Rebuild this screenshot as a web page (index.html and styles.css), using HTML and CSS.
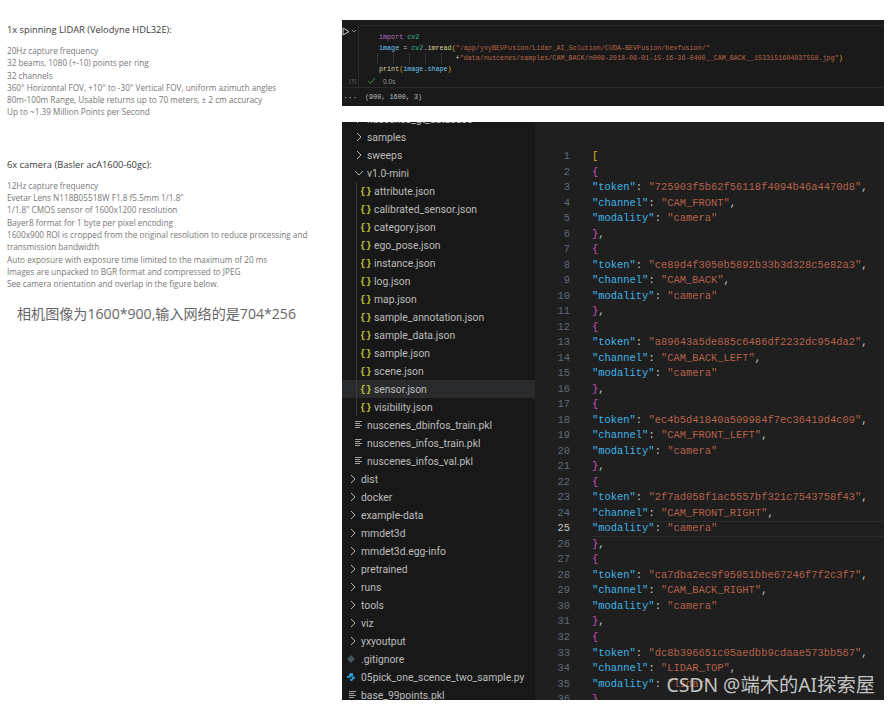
FILE: index.html
```html
<!DOCTYPE html>
<html lang="en">

<head>
    <meta charset="UTF-8">
    <meta name="viewport" content="width=device-width, initial-scale=1.0">
    <title>Sensors</title>
    <link rel="stylesheet" href="styles.css">
</head>

<body>
    <div class="page">
        <div class="notes">
            <h2 class="note-title first">1x spinning LIDAR (Velodyne HDL32E):</h2>
            <p class="note-text">20Hz capture frequency<br>32 beams, 1080 (+-10) points per ring<br>32 channels<br>360° Horizontal FOV, +10° to -30° Vertical FOV, uniform azimuth angles<br>80m-100m Range, Usable returns up to 70 meters, ± 2 cm accuracy<br>Up to ~1.39 Million Points per Second</p>
            <h2 class="note-title second">6x camera (Basler acA1600-60gc):</h2>
            <p class="note-text">12Hz capture frequency<br>Evetar Lens N118B05518W F1.8 f5.5mm 1/1.8"<br>1/1.8" CMOS sensor of 1600x1200 resolution<br>Bayer8 format for 1 byte per pixel encoding<br>1600x900 ROI is cropped from the original resolution to reduce processing and transmission bandwidth<br>Auto exposure with exposure time limited to the maximum of 20 ms<br>Images are unpacked to BGR format and compressed to JPEG<br>See camera orientation and overlap in the figure below.</p>
            <p class="note-cn">相机图像为1600*900,输入网络的是704*256</p>
        </div>

        <div class="shots">
            <div class="notebook">
                <div class="cell">
                    <div class="cell-run">
                        <svg width="16" height="10" viewBox="0 0 16 10"><path d="M1 1v7l6-3.500z" fill="none" stroke="#c5c5c5"/><path d="M10 3l2 2 2-2" fill="none" stroke="#8a8a8a"/></svg>
                    </div>
                    <div class="cell-body">
                        <pre class="cell-code"><span class="indent"></span><span class="kw">import</span> <span class="mod">cv2</span>
<span class="var">image</span> = <span class="mod">cv2</span>.<span class="fn">imread</span><span class="gold">(</span><span class="str">"/app/yxyBEVFusion/Lidar_AI_Solution/CUDA-BEVFusion/bevfusion/"</span>
                   +<span class="str">"data/nuscenes/samples/CAM_BACK/n008-2018-08-01-15-16-36-0400__CAM_BACK__1533151604037558.jpg"</span><span class="gold">)</span>
<span class="fn">print</span><span class="gold">(</span><span class="var">image</span>.<span class="var">shape</span><span class="gold">)</span></pre>
                        <div class="cell-status">
                            <span class="cell-count">[3]</span>
                            <svg class="cell-check" width="9" height="8" viewBox="0 0 9 8"><path d="M1 4l2.500 2.500L8 1" fill="none" stroke="#3f9142"/></svg>
                            <span class="cell-time">0.0s</span>
                        </div>
                    </div>
                </div>
                <div class="cell-output"><span class="dots">···</span><span class="output-text">(900, 1600, 3)</span></div>
            </div>

            <div class="ide">
                <div class="explorer">
                    <div class="guide"></div>
                    <div class="row d2"><svg class="chev" viewBox="0 0 8 10"><path d="M2 1l4 4-4 4"/></svg>nuscenes_gt_database</div>
                    <div class="row d2"><svg class="chev" viewBox="0 0 8 10"><path d="M2 1l4 4-4 4"/></svg>samples</div>
                    <div class="row d2"><svg class="chev" viewBox="0 0 8 10"><path d="M2 1l4 4-4 4"/></svg>sweeps</div>
                    <div class="row d2"><svg class="chev" viewBox="0 0 8 10"><path d="M0 3l4 4 4-4"/></svg>v1.0-mini</div>
                    <div class="row d3"><span class="json">{}</span>attribute.json</div>
                    <div class="row d3"><span class="json">{}</span>calibrated_sensor.json</div>
                    <div class="row d3"><span class="json">{}</span>category.json</div>
                    <div class="row d3"><span class="json">{}</span>ego_pose.json</div>
                    <div class="row d3"><span class="json">{}</span>instance.json</div>
                    <div class="row d3"><span class="json">{}</span>log.json</div>
                    <div class="row d3"><span class="json">{}</span>map.json</div>
                    <div class="row d3"><span class="json">{}</span>sample_annotation.json</div>
                    <div class="row d3"><span class="json">{}</span>sample_data.json</div>
                    <div class="row d3"><span class="json">{}</span>sample.json</div>
                    <div class="row d3"><span class="json">{}</span>scene.json</div>
                    <div class="row d3 selected"><span class="json">{}</span>sensor.json</div>
                    <div class="row d3"><span class="json">{}</span>visibility.json</div>
                    <div class="row d2"><svg class="lines" viewBox="0 0 8 8"><path d="M0 .5h7M0 2.500h5M0 4.500h7M0 6.500h5"/></svg>nuscenes_dbinfos_train.pkl</div>
                    <div class="row d2"><svg class="lines" viewBox="0 0 8 8"><path d="M0 .5h7M0 2.500h5M0 4.500h7M0 6.500h5"/></svg>nuscenes_infos_train.pkl</div>
                    <div class="row d2"><svg class="lines" viewBox="0 0 8 8"><path d="M0 .5h7M0 2.500h5M0 4.500h7M0 6.500h5"/></svg>nuscenes_infos_val.pkl</div>
                    <div class="row d1"><svg class="chev" viewBox="0 0 8 10"><path d="M2 1l4 4-4 4"/></svg>dist</div>
                    <div class="row d1"><svg class="chev" viewBox="0 0 8 10"><path d="M2 1l4 4-4 4"/></svg>docker</div>
                    <div class="row d1"><svg class="chev" viewBox="0 0 8 10"><path d="M2 1l4 4-4 4"/></svg>example-data</div>
                    <div class="row d1"><svg class="chev" viewBox="0 0 8 10"><path d="M2 1l4 4-4 4"/></svg>mmdet3d</div>
                    <div class="row d1"><svg class="chev" viewBox="0 0 8 10"><path d="M2 1l4 4-4 4"/></svg>mmdet3d.egg-info</div>
                    <div class="row d1"><svg class="chev" viewBox="0 0 8 10"><path d="M2 1l4 4-4 4"/></svg>pretrained</div>
                    <div class="row d1"><svg class="chev" viewBox="0 0 8 10"><path d="M2 1l4 4-4 4"/></svg>runs</div>
                    <div class="row d1"><svg class="chev" viewBox="0 0 8 10"><path d="M2 1l4 4-4 4"/></svg>tools</div>
                    <div class="row d1"><svg class="chev" viewBox="0 0 8 10"><path d="M2 1l4 4-4 4"/></svg>viz</div>
                    <div class="row d1"><svg class="chev" viewBox="0 0 8 10"><path d="M2 1l4 4-4 4"/></svg>yxyoutput</div>
                    <div class="row d0"><svg class="file-icon" viewBox="0 0 8 8"><path d="M4 0l4 4-4 4-4-4z" fill="#41535b"/></svg>.gitignore</div>
                    <div class="row d0"><svg class="file-icon" viewBox="0 0 8 8"><path d="M2 3V1.500L3.500 0h2L6 1v2H3v.500h3.500L8 4v1.500L6.500 6H5V4.500H2.500L2 5H.5L0 4V3z" fill="#2ba0e0"/><path d="M3 6h3v1l-1 1H3.500L3 7z" fill="#2ba0e0"/></svg>05pick_one_scence_two_sample.py</div>
                    <div class="row d1b"><svg class="lines" viewBox="0 0 8 8"><path d="M0 .5h7M0 2.500h5M0 4.500h7M0 6.500h5"/></svg>base_99points.pkl</div>
                </div>

                <div class="editor">
                    <div class="line"><span class="num">1</span><span class="code"><span class="gold">[</span></span></div>
                    <div class="line"><span class="num">2</span><span class="code"><span class="pink">{</span></span></div>
                    <div class="line"><span class="num">3</span><span class="code"><span class="key">"token"</span>: <span class="val">"725903f5b62f56118f4094b46a4470d8"</span>,</span></div>
                    <div class="line"><span class="num">4</span><span class="code"><span class="key">"channel"</span>: <span class="val">"CAM_FRONT"</span>,</span></div>
                    <div class="line"><span class="num">5</span><span class="code"><span class="key">"modality"</span>: <span class="val">"camera"</span></span></div>
                    <div class="line"><span class="num">6</span><span class="code"><span class="pink">}</span>,</span></div>
                    <div class="line"><span class="num">7</span><span class="code"><span class="pink">{</span></span></div>
                    <div class="line"><span class="num">8</span><span class="code"><span class="key">"token"</span>: <span class="val">"ce89d4f3050b5892b33b3d328c5e82a3"</span>,</span></div>
                    <div class="line"><span class="num">9</span><span class="code"><span class="key">"channel"</span>: <span class="val">"CAM_BACK"</span>,</span></div>
                    <div class="line"><span class="num">10</span><span class="code"><span class="key">"modality"</span>: <span class="val">"camera"</span></span></div>
                    <div class="line"><span class="num">11</span><span class="code"><span class="pink">}</span>,</span></div>
                    <div class="line"><span class="num">12</span><span class="code"><span class="pink">{</span></span></div>
                    <div class="line"><span class="num">13</span><span class="code"><span class="key">"token"</span>: <span class="val">"a89643a5de885c6486df2232dc954da2"</span>,</span></div>
                    <div class="line"><span class="num">14</span><span class="code"><span class="key">"channel"</span>: <span class="val">"CAM_BACK_LEFT"</span>,</span></div>
                    <div class="line"><span class="num">15</span><span class="code"><span class="key">"modality"</span>: <span class="val">"camera"</span></span></div>
                    <div class="line"><span class="num">16</span><span class="code"><span class="pink">}</span>,</span></div>
                    <div class="line"><span class="num">17</span><span class="code"><span class="pink">{</span></span></div>
                    <div class="line"><span class="num">18</span><span class="code"><span class="key">"token"</span>: <span class="val">"ec4b5d41840a509984f7ec36419d4c09"</span>,</span></div>
                    <div class="line"><span class="num">19</span><span class="code"><span class="key">"channel"</span>: <span class="val">"CAM_FRONT_LEFT"</span>,</span></div>
                    <div class="line"><span class="num">20</span><span class="code"><span class="key">"modality"</span>: <span class="val">"camera"</span></span></div>
                    <div class="line"><span class="num">21</span><span class="code"><span class="pink">}</span>,</span></div>
                    <div class="line"><span class="num">22</span><span class="code"><span class="pink">{</span></span></div>
                    <div class="line"><span class="num">23</span><span class="code"><span class="key">"token"</span>: <span class="val">"2f7ad058f1ac5557bf321c7543758f43"</span>,</span></div>
                    <div class="line"><span class="num">24</span><span class="code"><span class="key">"channel"</span>: <span class="val">"CAM_FRONT_RIGHT"</span>,</span></div>
                    <div class="line active"><span class="num">25</span><span class="code"><span class="key">"modality"</span>: <span class="val">"camera"</span></span></div>
                    <div class="line"><span class="num">26</span><span class="code"><span class="pink">}</span>,</span></div>
                    <div class="line"><span class="num">27</span><span class="code"><span class="pink">{</span></span></div>
                    <div class="line"><span class="num">28</span><span class="code"><span class="key">"token"</span>: <span class="val">"ca7dba2ec9f95951bbe67246f7f2c3f7"</span>,</span></div>
                    <div class="line"><span class="num">29</span><span class="code"><span class="key">"channel"</span>: <span class="val">"CAM_BACK_RIGHT"</span>,</span></div>
                    <div class="line"><span class="num">30</span><span class="code"><span class="key">"modality"</span>: <span class="val">"camera"</span></span></div>
                    <div class="line"><span class="num">31</span><span class="code"><span class="pink">}</span>,</span></div>
                    <div class="line"><span class="num">32</span><span class="code"><span class="pink">{</span></span></div>
                    <div class="line"><span class="num">33</span><span class="code"><span class="key">"token"</span>: <span class="val">"dc8b396651c05aedbb9cdaae573bb567"</span>,</span></div>
                    <div class="line"><span class="num">34</span><span class="code"><span class="key">"channel"</span>: <span class="val">"LIDAR_TOP"</span>,</span></div>
                    <div class="line"><span class="num">35</span><span class="code"><span class="key">"modality"</span>: <span class="val">"lidar"</span></span></div>
                    <div class="line"><span class="num">36</span><span class="code"><span class="pink">}</span>,</span></div>
                </div>

                <div class="watermark">CSDN @端木的AI探索屋</div>
            </div>
        </div>
    </div>
</body>

</html>
```

FILE: styles.css
```css
body {
    margin: 0;
    padding: 0;
    background-color: #fff;
    font-family: "Open Sans", "Noto Sans CJK SC", sans-serif;
}

.page {
    display: grid;
    grid-template-columns: 342px 542px;
    height: 704px;
    overflow: hidden;
}

/* left column */
.notes {
    padding: 23px 20px 0 7px;
}

.note-title {
    margin: 0;
    font-size: 9.3px;
    font-weight: 400;
    line-height: 13px;
    color: #3a3a3a;
}

.note-title.second {
    margin-top: 39px;
}

.note-text {
    margin: 9px 0 0;
    font-size: 8.2px;
    line-height: 12.3px;
    color: #777;
}

.note-cn {
    margin: 14px 0 0 10px;
    font-size: 14.1px;
    line-height: 20px;
    color: #666;
}

/* right column */
.shots {
    display: flex;
    flex-direction: column;
    gap: 16px;
    padding-top: 20px;
}

.notebook {
    display: flex;
    flex-direction: column;
    height: 86px;
    background-color: #1a1a1a;
}

.cell {
    display: flex;
    height: 68px;
    padding-top: 5px;
    box-sizing: border-box;
    border-bottom: 1px solid #2a2a2a;
}

.cell-run {
    width: 16px;
    flex: none;
    padding-top: 2px;
}

.cell-run svg {
    display: block;
}

.cell-body {
    flex: 1;
    border-left: 1px solid #2a2a2a;
    border-top: 1px solid #2a2a2a;
}

.cell-code {
    position: relative;
    margin: 0;
    padding: 6px 0 0 20px;
    height: 49px;
    box-sizing: border-box;
    font-family: "Liberation Mono", monospace;
    font-size: 6.72px;
    line-height: 10.67px;
    color: #c8c8c8;
}

/* wrapped line indent guides */
.indent {
    position: absolute;
    left: 18px;
    top: 27px;
    width: 80px;
    height: 10px;
    background: repeating-linear-gradient(90deg, #333 0, #333 1px, transparent 1px, transparent 16px);
}

.kw { color: #b56bc0; }
.mod { color: #3fb59c; }
.var { color: #6fc3f0; }
.fn { color: #d6d29a; }
.gold { color: #e0b020; }
.str { color: #b8664a; }

.cell-status {
    display: flex;
    align-items: center;
    height: 12px;
    font-size: 6.5px;
    color: #9a9a9a;
}

.cell-count {
    width: 0;
    position: relative;
    left: -10px;
    font-size: 6px;
    color: #666;
}

.cell-check {
    margin-left: 8px;
}

.cell-time {
    margin-left: 7px;
}

.cell-output {
    display: flex;
    align-items: center;
    flex: 1;
    font-family: "Liberation Mono", monospace;
    font-size: 6.8px;
    color: #bdbdbd;
}

.dots {
    width: 23px;
    padding-left: 1px;
    box-sizing: border-box;
    font-size: 8px;
}

/* vscode shot */
.ide {
    position: relative;
    display: flex;
    height: 578px;
    overflow: hidden;
}

.explorer {
    position: relative;
    width: 193px;
    flex: none;
    margin-top: -12px;
    background-color: #181818;
    font-family: Roboto, sans-serif;
    font-size: 10.35px;
    color: #bcbcbc;
}

.guide {
    position: absolute;
    left: 14px;
    top: 72px;
    width: 1px;
    height: 234px;
    background-color: #3a3a3a;
}

.row {
    display: flex;
    align-items: center;
    height: 18px;
    white-space: nowrap;
}

.row.selected {
    background-color: #2a2b2d;
}

.d0 { padding-left: 5px; }
.d1 { padding-left: 7px; }
.d1b { padding-left: 7px; }
.d2 { padding-left: 13px; }
.d3 { padding-left: 18px; }

.chev {
    width: 8px;
    height: 10px;
    flex: none;
    margin-right: 4px;
    fill: none;
    stroke: #b4b4b4;
}

.lines {
    width: 8px;
    height: 8px;
    flex: none;
    margin-right: 4px;
    fill: none;
    stroke: #a0a0a0;
}

.file-icon {
    width: 8px;
    height: 8px;
    flex: none;
    margin-right: 6px;
}

.json {
    width: 14px;
    flex: none;
    font-family: "Liberation Mono", monospace;
    font-size: 9.5px;
    font-weight: 700;
    color: #c4c62f;
}

.editor {
    flex: 1;
    padding-top: 27px;
    background-color: #1f1f1f;
    font-family: "Liberation Mono", monospace;
    font-size: 10.45px;
    line-height: 15.53px;
    color: #c8c8c8;
}

.line {
    display: flex;
    height: 15.53px;
}

.num {
    width: 35px;
    flex: none;
    text-align: right;
    color: #5f6a76;
}

.code {
    flex: 1;
    margin-left: 22px;
    white-space: pre;
}

.line.active .num {
    color: #c6c6c6;
}

.line.active .code {
    box-shadow: inset 0 1px 0 #2c2c2c, inset 0 -1px 0 #2c2c2c;
}

.key { color: #3fb4e6; }
.val { color: #b5614a; }
.pink { color: #d04fc0; }

.watermark {
    position: absolute;
    right: 9px;
    bottom: 4px;
    font-family: "Noto Sans", "Noto Sans CJK SC", sans-serif;
    font-size: 19.3px;
    line-height: 23px;
    color: rgba(225, 225, 225, 0.85);
}
```
